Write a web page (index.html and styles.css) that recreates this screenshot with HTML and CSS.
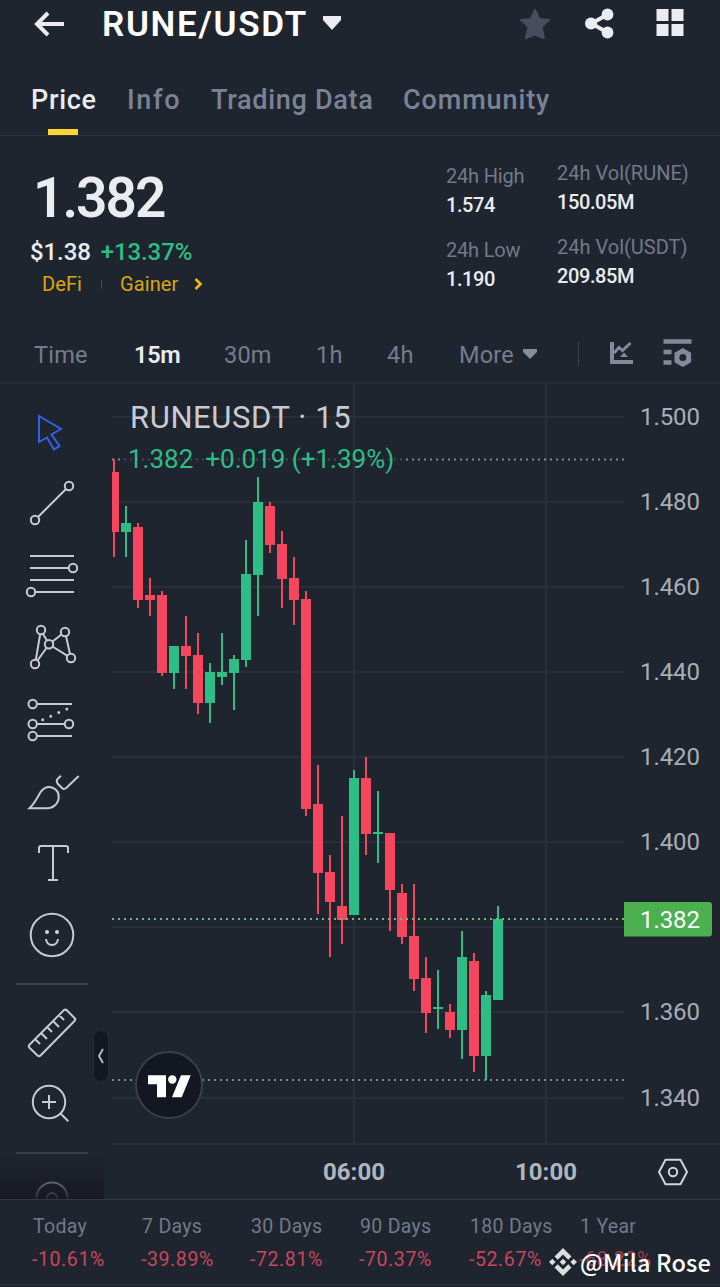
FILE: index.html
```html
<!DOCTYPE html>
<html lang="en">
<head>
  <meta charset="UTF-8">
  <title>RUNE/USDT</title>
  <meta name="viewport" content="width=device-width, initial-scale=1.0">
  <link rel="stylesheet" href="styles.css">
</head>
<body>
<header>
  <svg class="back" width="32" height="26" viewBox="0 0 32 26"><path d="M30 13H4M14 2L3 13L14 24" fill="none" stroke="#eaecef" stroke-width="4"/></svg>
  <h1>RUNE/USDT</h1>
  <svg class="caret" width="18" height="14" viewBox="0 0 18 14"><path d="M0 0H18V4L9 14L0 4Z" fill="#eaecef"/></svg>
  <div class="actions">
    <svg width="30" height="32" viewBox="0 0 30 32"><path d="M15 2L19.200 11L29 12L21.600 18.700L24 30L15 26.500L6 30L8.400 18.700L1 12L10.800 11Z" fill="#474d5c" stroke="#474d5c" stroke-width="2" stroke-linejoin="round"/></svg>
    <svg width="30" height="32" viewBox="0 0 30 32"><path d="M22.500 6.500L6.500 15.500L22.500 24.500" fill="none" stroke="#eaecef" stroke-width="4"/><g fill="#eaecef"><circle cx="22.500" cy="6.500" r="5.900"/><circle cx="6" cy="15.500" r="6"/><circle cx="22.500" cy="24.500" r="5.900"/></g></svg>
    <svg width="28" height="28" viewBox="0 0 28 28"><path d="M0.500 0H12.500V12H0.500ZM15.500 0H27.500V12H15.500ZM0.500 15H12.500V27H0.500ZM15.500 15H27.500V27H15.500Z" fill="#eaecef"/></svg>
  </div>
</header>
<nav class="tabs">
  <a class="active">Price</a>
  <a class="info">Info</a>
  <a>Trading Data</a>
  <a>Community</a>
</nav>
<section class="ticker">
  <div class="quote">
    <div class="last">1.382</div>
    <div class="change"><span class="usd">$1.38</span><span class="up">+13.37%</span></div>
    <div class="tags"><span class="defi">DeFi</span><i></i><span class="gainer">Gainer</span><svg width="9" height="12" viewBox="0 0 9 12"><path d="M1.500 1L6.500 6L1.500 11" fill="none" stroke="#f0b90b" stroke-width="2.600"/></svg></div>
  </div>
  <dl>
    <dt class="high">24h High</dt><dd>1.574</dd>
    <dt class="low">24h Low</dt><dd>1.190</dd>
  </dl>
  <dl class="volume">
    <dt>24h Vol(RUNE)</dt><dd>150.05M</dd>
    <dt>24h Vol(USDT)</dt><dd>209.85M</dd>
  </dl>
</section>
<nav class="intervals">
  <a>Time</a>
  <a class="active">15m</a>
  <a>30m</a>
  <a>1h</a>
  <a>4h</a>
  <a class="more">More<svg width="14" height="10" viewBox="0 0 14 10"><path d="M0 0H14V3L7 10L0 3Z" fill="#848e9c"/></svg></a>
  <i></i>
  <svg width="24" height="24" viewBox="0 0 24 24"><g fill="none" stroke="#858a9b"><path d="M3 1V21H24" stroke-width="4"/><path d="M5 12L10 6.500L13.500 9.500L21.500 2" stroke-width="2.800"/></g><path d="M11 16L15 11.500L19 16Z" fill="#858a9b"/></svg>
  <svg class="settings" width="29" height="30" viewBox="0 0 29 30"><path d="M0.500 3.500H28.500M0.500 14H8.500M0.500 24.500H8.500" stroke="#858a9b" stroke-width="4.500"/><path d="M19.800 10L28.100 14.700V24.300L19.800 29L11.500 24.300V14.700Z" fill="#858a9b"/><circle cx="19.800" cy="19.500" r="3.500" fill="#1f252f"/></svg>
</nav>
<main>
  <aside>
    <svg viewBox="0 0 72 72" class="selected"><path d="M23 20L45 33L35.500 38.500L43.500 50L38 53.500L31 41.500L23 46Z"/></svg>
    <svg viewBox="0 0 72 72"><circle cx="53" cy="18" r="4.200"/><circle cx="19" cy="52" r="4.200"/><path d="M50 21L22 49"/></svg>
    <svg viewBox="0 0 72 72"><path d="M14 16H58M14 28H53M14 40H58M19 52H58"/><circle cx="57" cy="28" r="4.200"/><circle cx="15" cy="52" r="4.200"/></svg>
    <svg viewBox="0 0 72 72"><g><circle cx="25" cy="18" r="4.200"/><circle cx="49" cy="20" r="4.200"/><circle cx="33" cy="32.300" r="4.200"/><circle cx="55" cy="46" r="4.200"/><circle cx="19" cy="52" r="4.200"/></g><path d="M24.200 22L19.800 48M27 22L31 28.500M30.500 36L21.500 48.500M36.500 29.500L45.500 22.500M50 24L54 42M36.500 34.500L51.500 43.800"/></svg>
    <svg viewBox="0 0 72 72"><path d="M21 20H56M21 40H49M21 52H56"/><circle cx="16.700" cy="20" r="4.200"/><circle cx="16.700" cy="40" r="4.200"/><circle cx="53" cy="40" r="4.200"/><circle cx="16.700" cy="52" r="4.200"/><path d="M26.700 35.700L52 24.500" class="dots"/></svg>
    <svg viewBox="0 0 72 72"><path d="M13.500 52.300C20 46 22.500 39 25 35.500C32 27 43 32 42.700 41.300C42.500 48 37 52.300 31 52.300ZM45 19.700L42 22.500Q39.500 25 42 28L46 32Q48 34 50.500 31.800L62.700 20"/></svg>
    <svg viewBox="0 0 72 72"><path d="M23 25V20Q23 18 25 18H50Q52 18 52 20V25M37 18V52M32 52H42"/></svg>
    <svg viewBox="0 0 72 72"><circle cx="36" cy="35" r="21.300"/><circle cx="31" cy="32" r="2" class="eye"/><circle cx="41" cy="32" r="2" class="eye"/><path d="M30 39C31 47 41 47 42 39"/></svg>
    <hr>
    <svg viewBox="0 0 72 72"><path d="M48 13Q49.500 12 51 13.500L58.500 21Q60 22.500 58.500 24L24.500 58.500Q23 60 21.500 58.500L13.500 50.800Q12 49.300 13.500 47.800ZM19.500 42.500L24 47M25.500 36.500L31 42M31.500 30.500L36 35M37.500 24.500L43 30M43.500 18.500L48 23"/></svg>
    <svg viewBox="0 0 72 72"><circle cx="33" cy="33" r="16.200"/><path d="M26 33H40M33 26V40M45 45L52.300 52.300"/></svg>
    <hr>
    <svg viewBox="0 0 72 72"><circle cx="36" cy="32" r="15.500"/><circle cx="36" cy="32" r="5"/></svg>
    <div class="fade"></div>
  </aside>
  <svg id="chart" width="608" height="815" viewBox="112 384 608 815"></svg>
  <div class="legend">
    <div class="symbol">RUNEUSDT · 15</div>
    <div class="delta"><span>1.382</span><span>+0.019 (+1.39%)</span></div>
  </div>
  <div class="collapse"><svg width="8" height="16" viewBox="0 0 8 16"><path d="M6 1L2 8L6 15" fill="none" stroke="#b2b5be" stroke-width="2"/></svg></div>
</main>
<footer>
  <div class="today"><span>Today</span><b>-10.61%</b></div>
  <div><span>7 Days</span><b>-39.89%</b></div>
  <div><span>30 Days</span><b>-72.81%</b></div>
  <div><span>90 Days</span><b>-70.37%</b></div>
  <div><span>180 Days</span><b>-52.67%</b></div>
  <div class="year"><span>1 Year</span><b>-68.22%</b></div>
  <div class="watermark">
    <svg width="28" height="28" viewBox="0 0 28 28"><g fill="#dcdddf"><path d="M14 0L22.500 8.500L19.200 11.800L14 6.600L8.800 11.800L5.500 8.500ZM14 28L22.500 19.500L19.200 16.200L14 21.400L8.800 16.200L5.500 19.500ZM3.300 10.700L6.600 14L3.300 17.300L0 14ZM24.700 10.700L28 14L24.700 17.300L21.400 14ZM14 10.700L17.300 14L14 17.300L10.700 14Z"/></g></svg>
    <span>@Mila Rose</span>
  </div>
</footer>
<script>
const UP = "#2ebd85", DOWN = "#f6465d";
// [body top, body bottom, wick top, wick bottom, rising]
const candles = [
  [472,532,459,557,0],[523,532,506,557,1],[527,600,523,608,0],[595,600,578,616,0],
  [595,673,591,676,0],[646,673,646,689,1],[646,656,616,689,0],[655,703,633,714,0],
  [672,703,663,723,1],[672,677,633,685,1],[659,673,655,710,1],[574,660,540,667,1],
  [502,575,477,616,1],[506,545,502,553,0],[544,579,531,608,0],[578,600,557,625,0],
  [599,809,591,816,0],[804,873,765,914,0],[872,902,855,957,0],[906,920,816,944,0],
  [778,915,770,915,1],[778,834,757,855,0],[832,834,791,863,1],[833,890,833,931,0],
  [893,937,884,944,0],[936,979,884,991,0],[978,1013,957,1033,0],[1007,1009,970,1029,1],
  [1012,1030,1004,1038,0],[957,1030,931,1059,1],[961,1056,953,1072,0],[995,1056,991,1080,1],
  [919,1000,906,1000,1]
];
const line = (x1, y1, x2, y2, cls) => `<line x1="${x1}" y1="${y1}" x2="${x2}" y2="${y2}" class="${cls}"/>`;
let out = "";

for (let i = 0; i < 9; i++) {
  const y = Math.round(417 + i * 85.07);
  out += line(112, y, 624, y, "grid");
  // 1.380 is hidden behind the last price tag
  if (i !== 6) out += `<text x="640" y="${y + 8.3}" textLength="60" class="price">${(1.5 - i * 0.02).toFixed(3)}</text>`;
}
[[354, "06:00"], [546, "10:00"]].forEach(([x, label]) => {
  out += line(x, 384, x, 1144, "grid");
  out += `<text x="${x}" y="1180" textLength="62" class="time">${label}</text>`;
});
out += line(112, 1144, 720, 1144, "grid");
out += line(112, 459.5, 122, 459.5, "dot") + line(124, 459.5, 402, 459.5, "dot dim") + line(406, 459.5, 624, 459.5, "dot");
out += line(112, 1080, 624, 1080, "dot");

candles.forEach(([top, bottom, high, low, up], i) => {
  const x = 114 + i * 12, color = up ? UP : DOWN;
  out += `<rect x="${x - 1}" y="${high}" width="2" height="${low - high}" fill="${color}"/>`;
  out += `<rect x="${x - 5}" y="${top}" width="10" height="${bottom - top}" fill="${color}"/>`;
});

out += line(112, 919, 624, 919, "dot green");
out += `<path d="M624 902H709Q712 902 712 905V933.500Q712 936.500 709 936.500H624Z" fill="#4caf50"/>
  <text x="640" y="928" textLength="60" class="price last-price">1.382</text>
  <circle cx="169" cy="1085" r="33" fill="#131722" stroke="#3b3f4a" stroke-width="2"/>
  <path d="M148 1075.300H166V1097.300H157V1084.300H148ZM181 1075.300H190.700L181.700 1097.300H172Z" fill="#fff"/>
  <circle cx="172.300" cy="1079.500" r="4.200" fill="#fff"/>
  <path d="M665.500 1159.700H680.500L687 1172L680.500 1184.300H665.500L659 1172Z" class="gear"/>
  <circle cx="673" cy="1172" r="4.200" class="gear"/>`;
document.getElementById("chart").innerHTML = out;
</script>
</body>
</html>
```
FILE: styles.css
```css
* { box-sizing: border-box; }
body { margin: 0; width: 720px; height: 1287px; overflow: hidden; font-family: Roboto, "Liberation Sans", sans-serif; background: #1f252f; color: #eaecef; }
svg { display: block; flex: none; }

header { display: flex; align-items: center; height: 50px; padding: 0 36px 3px 34px; }
header .back { margin-right: 36px; }
h1 { margin: 3px 0 0; font-size: 35px; line-height: 50px; font-weight: 600; letter-spacing: 1.7px; color: #fff; }
header .caret { margin: -2px 0 0 15px; }
.actions { display: flex; align-items: center; margin-left: auto; gap: 35px; }
.actions svg:last-child { margin: -1px 0 0 6px; }

.tabs { display: grid; grid-template-columns: 96px 84px 192px auto; height: 86px; padding: 30px 0 0 31px; border-bottom: 1px solid #2e343e; font-size: 27px; line-height: 40px; font-weight: 500; letter-spacing: 0.7px; color: #7b8294; }
.tabs .info { letter-spacing: 1.7px; }
.tabs a:last-child { letter-spacing: 0.9px; }
.tabs .active { position: relative; color: #eaecef; }
.tabs .active::after { content: ""; position: absolute; left: 17px; top: 49px; width: 30px; height: 6px; background: #fcd535; }

.ticker { display: grid; grid-template-columns: 416px 111px 162px; height: 190px; padding-left: 30px; }
.quote { padding-top: 32px; }
.last { padding-left: 3px; font-size: 55px; line-height: 60px; font-weight: 600; letter-spacing: -2px; }
.change { display: flex; gap: 10px; margin-top: 6px; font-size: 24px; line-height: 36px; font-weight: 500; letter-spacing: -0.1px; }
.up { color: #2ebd85; }
.tags { display: flex; align-items: center; padding-left: 12px; font-size: 20px; line-height: 28px; letter-spacing: 0.1px; color: #d9a514; }
.tags i { width: 1px; height: 9px; margin: 0 18px 0 19px; background: #474d57; }
.tags svg { margin-left: 16px; }
dl { margin: 0; padding-top: 26px; font-size: 20px; line-height: 28px; letter-spacing: -0.2px; }
dl.volume { padding-top: 23px; letter-spacing: 0; }
dt { color: #737987; }
dd { margin: 1px 0 17px; font-weight: 500; letter-spacing: -0.4px; }

.intervals { display: grid; grid-template-columns: 100px 90px 92px 71px 72px 119px 31px 54px auto; align-items: center; height: 58px; padding: 2px 0 0 34px; font-size: 23.5px; letter-spacing: 0.2px; color: #767c8c; border-bottom: 2px solid #262c36; }
.intervals .active { font-weight: 600; letter-spacing: -0.3px; color: #eaecef; }
.more { display: flex; align-items: center; gap: 9px; }
.more svg { margin-top: -3px; }
.intervals i { width: 1px; height: 24px; margin-top: -3px; background: #3a404b; }
.intervals > svg { margin-top: -4px; }

main { position: relative; display: flex; height: 815px; }
aside { position: relative; width: 112px; padding: 12px 0 0 16px; height: 815px; overflow: hidden; }
aside svg { width: 72px; height: 72px; fill: none; stroke: #c8cad2; stroke-width: 2; }
aside .selected { stroke: #3161e8; }
aside .dots { stroke-width: 3; stroke-dasharray: 0 8.800; stroke-linecap: round; }
aside .eye { fill: #d1d4dc; stroke: none; }
hr { width: 72px; height: 2px; margin: 11px 0 12px; border: 0; background: #3b404b; }
.fade { position: absolute; left: 0; bottom: 0; width: 104px; height: 48px; background: linear-gradient(rgba(19,22,32,0), rgba(22,24,36,.9)); }
.legend { position: absolute; left: 130px; top: 15px; }
.symbol { font-size: 31px; line-height: 38px; letter-spacing: 0.6px; color: #c9cbd3; }
.delta { display: flex; gap: 12px; margin: 6px 0 0 -2px; font-size: 26px; line-height: 32px; color: #2ebd85; }
.collapse { position: absolute; left: 93px; top: 646px; width: 16px; height: 52px; border-radius: 8px; background: #131722; border: 1px solid #262b36; display: flex; align-items: center; justify-content: center; }

.grid { stroke: #292f39; stroke-width: 2; }
.dot { stroke: #858993; stroke-width: 2; stroke-dasharray: 2 4; }
.dim { stroke: #454b55; }
.green { stroke: #6fb978; }
.price { font-size: 24px; fill: #a9adb7; }
.last-price { fill: #fff; }
.time { font-size: 24px; font-weight: 700; fill: #b2b5be; text-anchor: middle; }
.gear { fill: none; stroke: #d1d4dc; stroke-width: 2; }

footer { position: relative; display: grid; grid-template-columns: 109px 109px 109px 110px 110px auto; height: 88px; padding: 12px 0 0 32px; border-top: 1px solid #323842; font-size: 19.500px; line-height: 30px; letter-spacing: 0.3px; }
footer span { display: block; padding-left: 1px; color: #737987; }
footer b { display: block; margin-top: 3px; font-weight: 400; letter-spacing: 0.6px; color: #c9455b; }
footer::after { content: ""; position: absolute; left: 0; right: 0; bottom: 2px; height: 1px; background: #2e343e; }
.year b { opacity: 0.75; }
.watermark { position: absolute; z-index: 1; left: 549px; top: 44px; display: flex; align-items: center; gap: 2px; }
.watermark span { color: #fff; font: 500 23.500px/36px "Noto Sans CJK SC", sans-serif; letter-spacing: 0.2px; }
```
